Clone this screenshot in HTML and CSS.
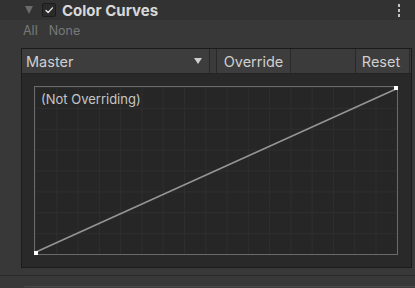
FILE: index.html
```html
<!DOCTYPE html>
<html>
<head>
<meta charset="utf-8">
<link rel="stylesheet" href="styles.css">
</head>
<body>
<div class="header">
  <span class="fold"></span>
  <span class="checkbox">
    <svg width="14" height="14" viewBox="0 0 14 14"><path d="M3.5 7.5 L6 10 L11 4.5" fill="none" stroke="#e6e6e6" stroke-width="1.6" stroke-linecap="round" stroke-linejoin="round"/></svg>
  </span>
  <span class="title">Color Curves</span>
  <span class="spacer"></span>
  <span class="menu"><i></i><i></i><i></i></span>
</div>
<div class="allnone"><span>All</span><span>None</span></div>
<div class="panel">
  <div class="toolbar">
    <div class="seg master"><span>Master</span><span class="arrow"></span></div>
    <div class="seg gap"></div>
    <div class="seg btn override">Override</div>
    <div class="seg empty"></div>
    <div class="seg btn reset">Reset</div>
  </div>
  <div class="content">
    <div class="graph">
      <span class="label">(Not Overriding)</span>
      <svg class="curve" viewBox="0 0 362 167" preserveAspectRatio="none">
        <line x1="1" y1="165" x2="361" y2="2" stroke="#959595" stroke-width="1.6"/>
      </svg>
      <span class="key k1"></span>
      <span class="key k2"></span>
    </div>
  </div>
</div>
<div class="sep"></div>
<div class="next"></div>
</body>
</html>
```

FILE: styles.css
```css
html, body {
  margin: 0;
  padding: 0;
}
body {
  width: 415px;
  height: 288px;
  overflow: hidden;
  background: #383838;
  font-family: Inter, "Noto Sans", sans-serif;
  color: #d2d2d2;
}
.header {
  height: 20px;
  background: #323232;
  display: flex;
  align-items: center;
}
.fold {
  margin-left: 25px;
  width: 0;
  height: 0;
  border-left: 4.5px solid transparent;
  border-right: 4.5px solid transparent;
  border-top: 8px solid #6b6b6b;
}
.checkbox {
  margin-left: 9px;
  width: 12px;
  height: 12px;
  border: 1px solid #1c1c1c;
  border-radius: 2px;
  background: #2a2a2a;
  display: flex;
  align-items: center;
  justify-content: center;
}
.checkbox svg {
  display: block;
}
.title {
  margin-left: 6px;
  font-weight: 700;
  font-size: 15px;
  color: #d8d8d8;
}
.spacer {
  flex: 1;
}
.menu {
  margin-right: 15px;
  display: flex;
  flex-direction: column;
  gap: 2px;
}
.menu i {
  display: block;
  width: 2px;
  height: 3px;
  background: #c4c4c4;
}
.allnone {
  height: 20px;
  display: flex;
  align-items: center;
  padding-left: 23px;
  gap: 11px;
  font-size: 12.5px;
  color: #787878;
}
.panel {
  margin: 8px 0 0 21px;
  width: 389px;
  border: 1px solid #1b1b1b;
  background: #292929;
}
.toolbar {
  height: 24px;
  display: flex;
  background: #3b3b3b;
  border-bottom: 1px solid #242424;
}
.seg {
  height: 24px;
  box-sizing: border-box;
  display: flex;
  align-items: center;
  font-size: 14.5px;
  color: #cfcfcf;
}
.master {
  width: 188px;
  padding-left: 4px;
  padding-right: 7px;
  justify-content: space-between;
  border-right: 1px solid #292929;
  background: #3d3d3d;
}
.arrow {
  width: 0;
  height: 0;
  border-left: 4.5px solid transparent;
  border-right: 4.5px solid transparent;
  border-top: 6px solid #cfcfcf;
}
.gap {
  width: 6px;
}
.btn {
  justify-content: center;
  border-left: 1px solid #292929;
  border-right: 1px solid #292929;
  background: #3d3d3d;
}
.override {
  width: 75px;
}
.empty {
  width: 64px;
}
.reset {
  width: 55px;
  padding-right: 3px;
}
.content {
  padding: 12px 13px 12px 12px;
}
.graph {
  position: relative;
  height: 167px;
  border: 1px solid #6a6a6a;
  background-color: #262626;
  background-image:
    linear-gradient(to right, #2e2e2e 1px, transparent 1px),
    linear-gradient(to bottom, #2e2e2e 1px, transparent 1px);
  background-size: calc(100% / 17) calc(100% / 8);
}
.label {
  position: absolute;
  left: 6px;
  top: 4px;
  font-size: 13px;
  color: #c6c6c6;
}
.curve {
  position: absolute;
  left: 0;
  top: 0;
  width: 100%;
  height: 100%;
}
.key {
  position: absolute;
  width: 4px;
  height: 4px;
  background: #ffffff;
}
.k1 {
  left: -1px;
  bottom: -1px;
}
.k2 {
  right: -1px;
  top: -1px;
}
.sep {
  margin-top: 7px;
  height: 1px;
  background: #2a2a2a;
}
.next {
  margin: 10px 0 0 23px;
  height: 6px;
  border-top: 1px solid #4a4a4a;
  border-radius: 3px 0 0 0;
  background: #3c3c3c;
}
```
